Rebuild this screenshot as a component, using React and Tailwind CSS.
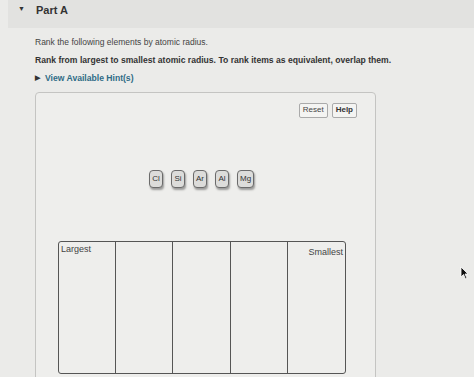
import React from "react";

const tiles = ["Cl", "Si", "Ar", "Al", "Mg"];

function Tile({ label }) {
  return (
    <div className="h-[18px] min-w-[14px] px-[2px] flex items-center justify-center rounded-[4px] border border-[#6b6b6b] bg-[#dcdcda] text-[8px] text-[#333] shadow-[1px_2px_2px_rgba(0,0,0,0.35)]">
      {label}
    </div>
  );
}

export default function App() {
  return (
    <div
      className="w-[474px] h-[377px] overflow-hidden bg-[#ebebe9] text-[#333] relative"
      style={{ fontFamily: '"Liberation Sans", Arial, sans-serif' }}
    >
      {/* part header */}
      <div className="h-[28px] ml-[8px] bg-[#e2e2e0] flex items-start pt-[2px]">
        <span className="ml-[10px] mt-[2px] text-[7px] text-[#333]">▼</span>
        <span className="ml-[11px] text-[11px] font-bold text-[#333]">Part A</span>
      </div>

      <div className="pl-[35px] pt-[8px]">
        <p className="text-[8.5px] text-[#444]">Rank the following elements by atomic radius.</p>
        <p className="mt-[5px] text-[8.6px] font-bold text-[#333]">
          Rank from largest to smallest atomic radius. To rank items as equivalent, overlap them.
        </p>
        <div className="mt-[5px] flex items-center text-[8.6px] font-bold text-[#2f6b86]">
          <span className="text-[7px] text-[#333] mr-[5px]">▶</span>
          View Available Hint(s)
        </div>

        {/* ranking box */}
        <div className="mt-[7px] w-[341px] h-[300px] border border-[#c4c4c2] rounded-[4px] bg-[#eeeeec]">
          <div className="flex justify-end gap-[4px] pt-[10px] pr-[18px]">
            <button className="px-[3px] h-[15px] border border-[#aaa] rounded-[2px] bg-[#f4f4f2] text-[8px] text-[#444]">Reset</button>
            <button className="px-[3px] h-[15px] border border-[#aaa] rounded-[2px] bg-[#f4f4f2] text-[8px] font-bold text-[#333]">Help</button>
          </div>

          <div className="flex gap-[8px] mt-[52px] pl-[113px]">
            {tiles.map((t) => (
              <Tile key={t} label={t} />
            ))}
          </div>

          <div className="ml-[22px] mt-[53px] w-[288px] h-[133px] border border-[#555] rounded-[3px] grid grid-cols-5">
            <div className="border-r border-[#555] px-[2px] pt-[1px] text-[9px] text-[#444]">Largest</div>
            <div className="border-r border-[#555]" />
            <div className="border-r border-[#555]" />
            <div className="border-r border-[#555]" />
            <div className="flex justify-end px-[2px] pt-[4px] text-[9px] text-[#444]">Smallest</div>
          </div>
        </div>
      </div>

      {/* mouse cursor */}
      <svg className="absolute left-[460px] top-[266px]" width="9" height="14" viewBox="0 0 9 14">
        <path d="M1 1 L1 11 L3.5 8.5 L5.5 13 L7 12.3 L5 8 L8 8 Z" fill="#111" stroke="#fff" strokeWidth="0.8" />
      </svg>
    </div>
  );
}
